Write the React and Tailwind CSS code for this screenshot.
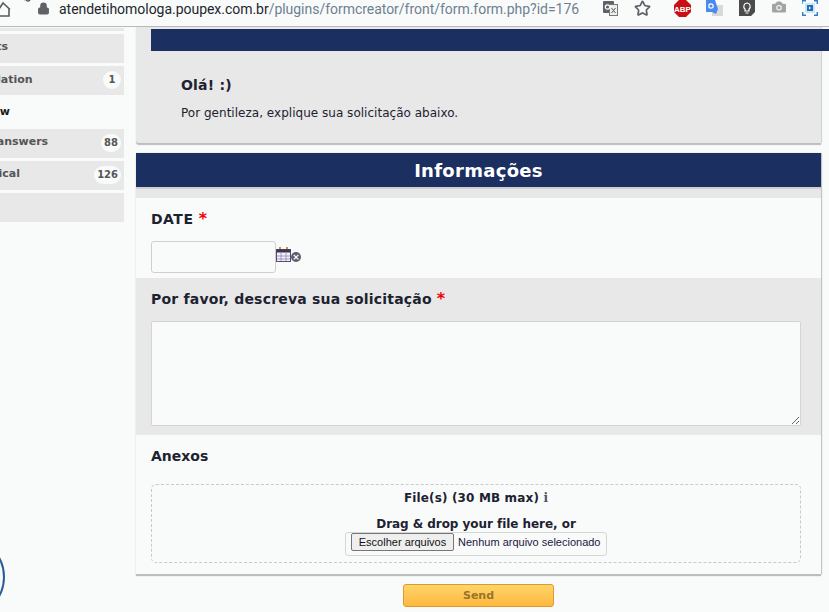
import { Star, Lock, Camera } from 'lucide-react';

const menu = [
  { label: 'Tickets', offset: '-ml-[36px]', pad: 'pt-[5px]', row: 'h-[29px] bg-[#e8e8e8] mt-[3px]' },
  { label: 'Validation', offset: '-ml-[30px]', pad: 'pt-[6px]', count: '1', row: 'h-[29px] bg-[#e8e8e8] mt-[3px]' },
  { label: 'New', offset: '-ml-[17px]', pad: 'pt-[9px]', active: true, row: 'h-[34px]' },
  { label: 'Unanswers', offset: '-ml-[20px]', pad: 'pt-[5px]', count: '88', row: 'h-[29px] bg-[#e8e8e8]' },
  { label: 'Critical', offset: '-ml-[24px]', pad: 'pt-[5px]', count: '126', row: 'h-[29px] bg-[#e8e8e8] mt-[3px]' },
  { label: '', offset: '', pad: '', row: 'h-[29px] bg-[#e8e8e8] mt-[3px]' },
];

const Toolbar = () => (
  <div className="h-[27px] border-b border-[#b9b9b9] bg-[#f9fbfb] flex items-center relative overflow-hidden shrink-0 font-['Roboto',sans-serif]">
    <svg className="-mt-[9px]" width="11" height="16" viewBox="0 0 11 16" fill="none" stroke="#5a5a5a" strokeWidth="1.6">
      <path d="M-1 8L3 2l7 6.5M9 8v7H-1" />
    </svg>
    <svg className="ml-[9px] -mt-[26px]" width="11" height="6" viewBox="0 0 11 6" fill="none" stroke="#555" strokeWidth="1.4">
      <path d="M1 0l4 3" />
      <circle cx="8" cy="2" r="2" />
    </svg>
    <Lock className="w-[13px] h-[13px] ml-[6px] -mt-[9px] text-[#5f6368] fill-[#5f6368]" strokeWidth={2} />
    <div className="ml-[9px] -mt-[7px] text-[14px] -tracking-[0.03px] whitespace-nowrap text-[#6f8090]">
      <span className="text-[#22262c]">atendetihomologa.poupex.com.br</span>/plugins/formcreator/front/form.form.php?id=176
    </div>
    <div className="absolute top-0 left-0 w-full h-full">
      <svg className="absolute left-[603px] top-[1px]" width="15" height="15" viewBox="0 0 15 15">
        <rect x="0" y="0" width="11" height="12" rx="1" fill="#5f6368" />
        <rect x="6.5" y="3.5" width="8" height="11" fill="#eee" stroke="#777" />
        <circle cx="4.5" cy="6" r="2.2" fill="none" stroke="#fff" strokeWidth="1.2" />
        <path d="M8.5 7l4 5M12.5 7l-4 5" stroke="#555" />
      </svg>
      <Star className="absolute left-[634px] top-[0px] w-[17px] h-[17px] text-[#5a5f66]" strokeWidth={2.4} />
      <svg className="absolute left-[674px] top-[0px]" width="17" height="17" viewBox="0 0 17 17">
        <polygon points="5,0 12,0 17,5 17,12 12,17 5,17 0,12 0,5" fill="#c90f13" />
        <text x="8.5" y="11.5" textAnchor="middle" fontSize="8" fontWeight="700" fill="#fff" fontFamily="Liberation Sans">ABP</text>
      </svg>
      <svg className="absolute left-[706px] top-[0px]" width="17" height="16" viewBox="0 0 17 16">
        <rect x="6" y="5" width="11" height="11" fill="#d9d9d9" />
        <path d="M0 0h9l3 9-2 5-4-2H0z" fill="#4a8af0" />
        <circle cx="5" cy="6" r="2.2" fill="none" stroke="#fff" strokeWidth="1.2" />
      </svg>
      <svg className="absolute left-[739px] top-[0px]" width="16" height="16" viewBox="0 0 16 16">
        <path d="M0 0h16v12l-4 4H0z" fill="#4b4b4b" />
        <path d="M8 3a3.4 3.4 0 0 0-2 6v2h4V9a3.4 3.4 0 0 0-2-6z" fill="none" stroke="#fff" strokeWidth="1.2" />
        <path d="M6.5 13h3" stroke="#fff" />
      </svg>
      <Camera className="absolute left-[770px] top-[-2px] w-[18px] h-[18px] text-[#a3a3a3] fill-[#a3a3a3]" stroke="#f9fbfb" strokeWidth={1.4} />
      <svg className="absolute left-[802px] top-[0px]" width="16" height="16" viewBox="0 0 16 16" fill="none">
        <path d="M0 4V0.7h4M12 0.7h3.3V4M15.3 12v3.3H12M4 15.3H0.7V12" stroke="#2f7fc8" strokeWidth="1.4" />
        <rect x="3" y="3" width="10" height="10" fill="#cfe4f5" />
        <rect x="5" y="5" width="6" height="6" fill="#1d6fb8" />
        <path d="M7 6.5l2 1.5-2 1.5z" fill="#fff" />
      </svg>
    </div>
  </div>
);

const Sidebar = () => (
  <aside className="w-[124px] shrink-0 overflow-hidden">
    <div className="h-[3px] bg-[#e8e8e8] mt-[1px]" />
    {menu.map((item, i) => (
      <div key={i} className={`${item.row} flex items-start relative`}>
        <span className={`${item.offset} ${item.pad} text-[11px] font-bold whitespace-nowrap ${item.active ? 'text-[#1b1b1b]' : 'text-[#555]'}`}>
          {item.label}
        </span>
        {item.count && (
          <span className="absolute right-[3px] top-[5px] min-w-[18px] h-[18px] px-[3px] rounded-full bg-[#f9fbfb] text-[10px] font-bold leading-[18px] text-center text-[#555]">
            {item.count}
          </span>
        )}
      </div>
    ))}
  </aside>
);

export default function App() {
  return (
    <div className="relative w-[829px] h-[612px] overflow-hidden bg-[#f9fbfb] flex flex-col text-[#1d2230] font-['DejaVu_Sans',sans-serif]">
      <Toolbar />
      <div className="flex flex-1 gap-[12px]">
        <Sidebar />
        <main className="w-[685px] shrink-0">
          <section className="h-[116px] bg-[#e8e8e8] rounded-bl-[3px] pl-[15px] pt-[2px] shadow-[0_2px_1px_#bdbdbd,1px_0_1px_#d0d0d0]">
            <div className="h-[22px] -mr-[8px] bg-[#1b2f61]" />
            <div className="pl-[30px] pt-[26px]">
              <h2 className="text-[14px] leading-[17px] font-bold tracking-[0.2px]">Olá! :)</h2>
              <p className="mt-[12px] text-[12px] leading-[15px] tracking-[0.02px]">Por gentileza, explique sua solicitação abaixo.</p>
            </div>
          </section>

          <section className="mt-[10px] h-[421px] shadow-[0_2px_1px_#bdbdbd,1px_0_1px_#c4c4c4] flex flex-col">
            <div className="h-[34px] shrink-0 bg-[#1b2f61] text-white text-[18px] leading-[36px] font-bold text-center tracking-[0.3px]">Informações</div>
            <div className="h-[11px] shrink-0 bg-[#e8e8e8] shadow-[inset_0_2px_1px_#cfcfcf]" />

            <div className="h-[80px] shrink-0 px-[15px] pt-[13px]">
              <label className="block text-[14px] leading-[17px] font-bold tracking-[0.5px]">
                DATE <span className="text-[#f00000] text-[16px] leading-[10px]">*</span>
              </label>
              <div className="mt-[13px] flex items-center">
                <input className="w-[125px] h-[32px] bg-[#f9fbfb] border border-[#cfcfcf] rounded-[3px]" />
                <svg width="16" height="16" viewBox="0 0 16 16" className="-mt-[7px]" fill="none">
                  <path d="M4 1v3M11 1v3" stroke="#c9963a" strokeWidth="2" />
                  <rect x="0.5" y="3.5" width="14" height="12" fill="#f4f0f8" stroke="#5b4a78" />
                  <rect x="0.5" y="3.5" width="14" height="3" fill="#3d3552" />
                  <path d="M5 7v8M10 7v8M1 10h13M1 13h13" stroke="#8f87b4" strokeWidth="0.8" />
                </svg>
                <span className="w-[10px] h-[10px] rounded-full bg-[#5b6068] text-white text-[9px] leading-[10px] font-bold text-center -mt-[1px] -ml-[1px]">×</span>
              </div>
            </div>

            <div className="h-[157px] shrink-0 bg-[#e8e8e8] px-[15px] pt-[13px]">
              <label className="block text-[14px] leading-[17px] font-bold tracking-[0.2px]">
                Por favor, descreva sua solicitação <span className="text-[#f00000] text-[16px] leading-[10px]">*</span>
              </label>
              <textarea className="block mt-[13px] w-[650px] h-[105px] bg-[#f9fbfb] border border-[#d4d4d4] rounded-[2px]" />
            </div>

            <div className="flex-1 px-[15px] pt-[13px]">
              <label className="block text-[14px] leading-[17px] font-bold">Anexos</label>
              <div className="mt-[19px] w-[650px] h-[79px] border border-dashed border-[#c9c9c9] rounded-[5px] flex flex-col items-center text-[12px] font-bold">
                <div className="mt-[6px] leading-[15px] tracking-[0.15px]">
                  File(s) (30 MB max) <span className="font-['DejaVu_Serif',serif] text-[#4b5563]">i</span>
                </div>
                <div className="mt-[11px] leading-[15px] -tracking-[0.05px]">Drag &amp; drop your file here, or</div>
                <div className="w-[262px] h-[24px] border border-[#d6d6d6] rounded-[3px] flex items-start pl-[5px] font-normal text-[11px] font-['Liberation_Sans',sans-serif]">
                  <button className="w-[103px] h-[18px] bg-[#efefef] border border-[#767676] rounded-[2px] text-[#111] text-[11px] leading-[16px]">Escolher arquivos</button>
                  <span className="ml-[4px] leading-[18px] whitespace-nowrap text-[#1d1640]">Nenhum arquivo selecionado</span>
                </div>
              </div>
            </div>
          </section>

          <div className="mt-[10px] flex justify-center">
            <button className="w-[151px] h-[23px] pt-[1px] rounded-[3px] border border-[#e09a2c] bg-gradient-to-b from-[#ffd568] to-[#ffb83e] text-[11px] font-bold text-[#98742c]">Send</button>
          </div>
        </main>
      </div>
      <svg className="absolute left-0 top-[535px]" width="6" height="84" viewBox="0 0 6 84" fill="none">
        <circle cx="-36" cy="42" r="40" stroke="#2a5c9c" strokeWidth="2" />
      </svg>
    </div>
  );
}
